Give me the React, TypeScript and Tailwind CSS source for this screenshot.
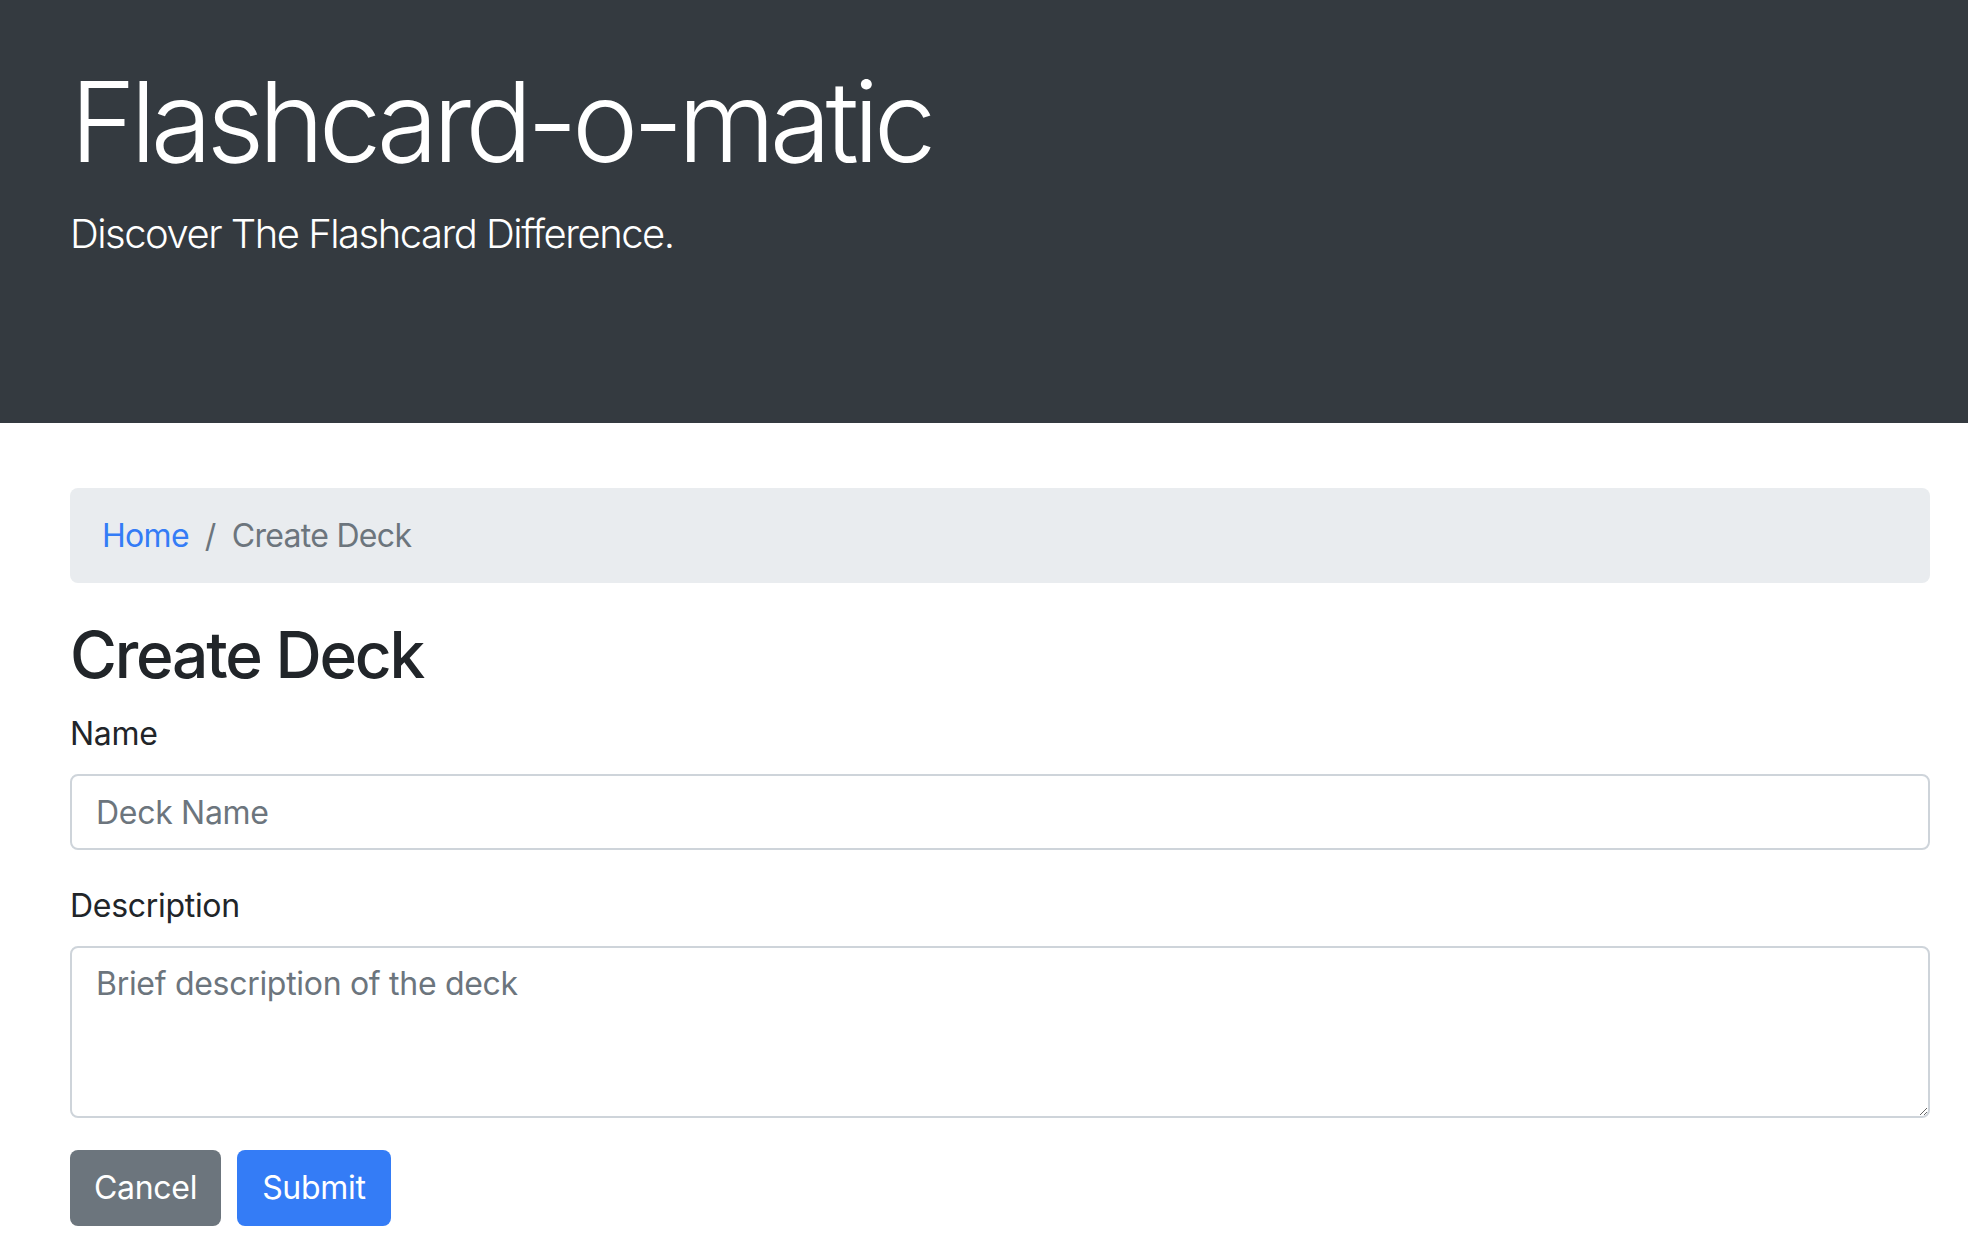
const FONT = "font-['Inter','Liberation_Sans',sans-serif]";

const Jumbotron = () => (
  <header className="h-[423px] bg-[#343a40] pl-[70px] pt-[54px] text-white">
    <h1 className="text-[112px] font-light leading-[134px] tracking-[-5.7px]">Flashcard-o-matic</h1>
    <p className="mt-[16px] text-[40px] font-light leading-[60px] tracking-[-1.5px]">
      Discover The Flashcard Difference.
    </p>
  </header>
);

const Breadcrumb = () => (
  <nav className="flex h-[95px] items-center rounded-[8px] bg-[#e9ecef] px-[32px] text-[32px] leading-[48px] tracking-[-0.7px]">
    <a href="#" className="text-[#347cf6]">
      Home
    </a>
    <span className="px-[16px] text-[#6c757d]">/</span>
    <span className="text-[#6c757d]">Create Deck</span>
  </nav>
);

const App = () => (
  <div className={`${FONT} min-h-screen bg-white text-[#212529]`}>
    <Jumbotron />
    <main className="pl-[70px] pr-[38px] pt-[65px]">
      <Breadcrumb />
      <h2 className="mt-[33px] mb-[17px] text-[64px] font-medium leading-[77px] tracking-[-2.2px]">
        Create Deck
      </h2>
      <form className="flex flex-col text-[32px] leading-[48px] tracking-[-0.3px]">
        <label htmlFor="name" className="mb-[16px]">
          Name
        </label>
        <input
          id="name"
          type="text"
          placeholder="Deck Name"
          className="h-[76px] w-full rounded-[8px] border-2 border-[#ced4da] px-[24px] placeholder:text-[#6c757d] outline-none"
        />
        <label htmlFor="description" className="mt-[32px] mb-[16px]">
          Description
        </label>
        <textarea
          id="description"
          rows={3}
          placeholder="Brief description of the deck"
          className="h-[172px] w-full rounded-[8px] border-2 border-[#ced4da] px-[24px] py-[12px] placeholder:text-[#6c757d] outline-none"
        />
        <div className="mt-[32px] flex gap-[16px]">
          <button type="button" className="h-[76px] rounded-[8px] bg-[#6c757d] px-[24px] text-white">
            Cancel
          </button>
          <button type="submit" className="h-[76px] rounded-[8px] bg-[#347cf6] px-[25px] text-white">
            Submit
          </button>
        </div>
      </form>
    </main>
  </div>
);

export default App;
